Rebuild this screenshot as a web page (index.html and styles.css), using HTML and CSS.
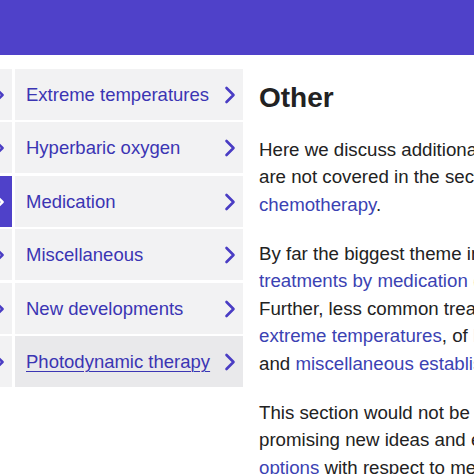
FILE: index.html
```html
<!DOCTYPE html>
<html lang="en">
<head>
<meta charset="utf-8">
<title>Other</title>
<link rel="stylesheet" href="styles.css">
</head>
<body>
<header class="topbar"></header>
<div class="layout">
  <nav class="col col-prev">
    <a class="item" href="#"><span class="label">Surgery</span><svg class="chev" viewBox="0 0 12 18"><path d="M2.5 2 L9.5 9 L2.5 16"/></svg></a>
    <a class="item" href="#"><span class="label">Radiation</span><svg class="chev" viewBox="0 0 12 18"><path d="M2.5 2 L9.5 9 L2.5 16"/></svg></a>
    <a class="item active" href="#"><span class="label">Other</span><svg class="chev" viewBox="0 0 12 18"><path d="M2.5 2 L9.5 9 L2.5 16"/></svg></a>
    <a class="item" href="#"><span class="label">Diagnosis</span><svg class="chev" viewBox="0 0 12 18"><path d="M2.5 2 L9.5 9 L2.5 16"/></svg></a>
    <a class="item" href="#"><span class="label">Prevention</span><svg class="chev" viewBox="0 0 12 18"><path d="M2.5 2 L9.5 9 L2.5 16"/></svg></a>
    <a class="item" href="#"><span class="label">Research</span><svg class="chev" viewBox="0 0 12 18"><path d="M2.5 2 L9.5 9 L2.5 16"/></svg></a>
  </nav>
  <nav class="col col-cur">
    <a class="item" href="#"><span class="label">Extreme temperatures</span><svg class="chev" viewBox="0 0 12 18"><path d="M2.5 2 L9.5 9 L2.5 16"/></svg></a>
    <a class="item" href="#"><span class="label">Hyperbaric oxygen</span><svg class="chev" viewBox="0 0 12 18"><path d="M2.5 2 L9.5 9 L2.5 16"/></svg></a>
    <a class="item" href="#"><span class="label">Medication</span><svg class="chev" viewBox="0 0 12 18"><path d="M2.5 2 L9.5 9 L2.5 16"/></svg></a>
    <a class="item" href="#"><span class="label">Miscellaneous</span><svg class="chev" viewBox="0 0 12 18"><path d="M2.5 2 L9.5 9 L2.5 16"/></svg></a>
    <a class="item" href="#"><span class="label">New developments</span><svg class="chev" viewBox="0 0 12 18"><path d="M2.5 2 L9.5 9 L2.5 16"/></svg></a>
    <a class="item hover" href="#"><span class="label">Photodynamic therapy</span><svg class="chev" viewBox="0 0 12 18"><path d="M2.5 2 L9.5 9 L2.5 16"/></svg></a>
  </nav>
  <main class="content">
    <h1 class="title">Other</h1>
    <p class="para">Here we discuss additional treatments for cancer that<br>are not covered in the sections on surgery, radiation and<br><a href="#">chemotherapy</a>.</p>
    <p class="para">By far the biggest theme in this section are the<br><a href="#">treatments by medication</a> (other than chemotherapy).<br>Further, less common treatments are the use of<br><a href="#">extreme temperatures</a>, of <a href="#">hyperbaric oxygen</a>,<br>and <a href="#">miscellaneous established approaches</a>.</p>
    <p class="para">This section would not be complete without the<br>promising new ideas and experimental treatment<br><a href="#">options</a> with respect to medication and technology.</p>
  </main>
</div>
</body>
</html>
```

FILE: styles.css
```css
html, body {
  margin: 0;
  padding: 0;
  background: #ffffff;
  overflow: hidden;
  width: 474px;
  height: 474px;
}
body {
  font-family: "Liberation Sans", Arial, sans-serif;
  color: #222222;
}
.topbar {
  height: 55px;
  background: #4f41c9;
}
.layout {
  display: flex;
  align-items: flex-start;
  padding-top: 14px;
}
.col {
  display: flex;
  flex-direction: column;
  gap: 2.4px;
  flex: none;
}
.col-prev {
  width: 200px;
  margin-left: -188px;
}
.col-cur {
  width: 228px;
  margin-left: 3px;
}
.item {
  display: flex;
  align-items: center;
  justify-content: space-between;
  height: 51px;
  padding: 1px 7px 0 11px;
  background: #f2f2f3;
  color: #3b35b3;
  text-decoration: none;
  font-size: 18.5px;
  box-sizing: border-box;
}
.item .label {
  white-space: nowrap;
}
.chev {
  width: 12px;
  height: 18px;
  flex: none;
}
.chev path {
  fill: none;
  stroke: #4a3dc4;
  stroke-width: 2.6;
  stroke-linecap: round;
  stroke-linejoin: round;
}
.item.active {
  background: #4f41c9;
  color: #ffffff;
}
.item.active .chev path {
  stroke: #ffffff;
}
.item.hover {
  background: #e9e9eb;
}
.item.hover .label {
  text-decoration: underline;
  text-decoration-thickness: 1px;
  text-underline-offset: 3px;
}
.content {
  flex: none;
  width: 600px;
  margin-left: 16px;
}
.title {
  margin: 13.3px 0 0 0;
  font-size: 28px;
  font-weight: 700;
  line-height: 32px;
  color: #222222;
}
.para {
  margin: 21.5px 0 0 0;
  font-size: 18.7px;
  line-height: 27.5px;
  white-space: nowrap;
}
.para a {
  color: #3b42b3;
  text-decoration: none;
}
```
